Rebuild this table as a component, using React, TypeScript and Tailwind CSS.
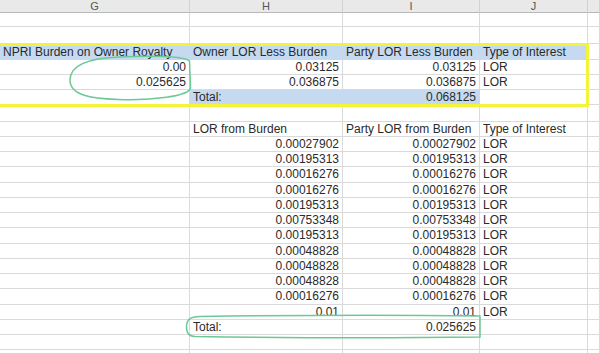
type Cell = { t?: string; r?: boolean; blue?: boolean }

const lowerRows: [string, string][] = [
  ['0.00027902', '0.00027902'],
  ['0.00195313', '0.00195313'],
  ['0.00016276', '0.00016276'],
  ['0.00016276', '0.00016276'],
  ['0.00195313', '0.00195313'],
  ['0.00753348', '0.00753348'],
  ['0.00195313', '0.00195313'],
  ['0.00048828', '0.00048828'],
  ['0.00048828', '0.00048828'],
  ['0.00048828', '0.00048828'],
  ['0.00016276', '0.00016276'],
  ['0.01', '0.01'],
]

const empty: Cell[] = [{}, {}, {}, {}, {}]

const rows: Cell[][] = [
  empty,
  empty,
  [
    { t: 'NPRI Burden on Owner Royalty', blue: true },
    { t: 'Owner LOR Less Burden', blue: true },
    { t: 'Party LOR Less Burden', blue: true },
    { t: 'Type of Interest', blue: true },
    {},
  ],
  [{ t: '0.00', r: true }, { t: '0.03125', r: true }, { t: '0.03125', r: true }, { t: 'LOR' }, {}],
  [{ t: '0.025625', r: true }, { t: '0.036875', r: true }, { t: '0.036875', r: true }, { t: 'LOR' }, {}],
  [{}, { t: 'Total:', blue: true }, { t: '0.068125', r: true, blue: true }, {}, {}],
  empty,
  [{}, { t: 'LOR from Burden' }, { t: 'Party LOR from Burden' }, { t: 'Type of Interest' }, {}],
  ...lowerRows.map(([a, b]) => [{}, { t: a, r: true }, { t: b, r: true }, { t: 'LOR' }, {}]),
  [{}, { t: 'Total:' }, { t: '0.025625', r: true }, {}, {}],
  empty,
  empty,
]

const letters = ['G', 'H', 'I', 'J', '']

export default function App() {
  return (
    <div
      className="relative h-[353px] w-[600px] overflow-hidden bg-white text-[#2a2a2a]"
      style={{ fontFamily: '"Liberation Sans", Arial, sans-serif' }}
    >
      <div className="grid grid-cols-[190px_153px_137px_108px_1fr] grid-rows-[13px_14px_17px_16px_15px_15px_15px_16.5px_repeat(16,15.25px)]">
        {letters.map((l, i) => (
          <div
            key={'h' + i}
            className="flex items-start justify-center border-r border-b border-r-[#d2d2d2] border-b-[#b8b8b8] bg-[#e9e9e9] text-[11px] leading-[12px] text-[#555]"
          >
            {l}
          </div>
        ))}
        {rows.map((row, ri) =>
          row.map((c, ci) => (
            <div
              key={ri + '-' + ci}
              className={
                'flex items-center overflow-visible whitespace-nowrap border-r border-b px-[3px] text-[12px] leading-none ' +
                (c.r ? 'justify-end ' : 'justify-start ') +
                (c.blue ? 'border-[#c5d9f1] bg-[#c5d9f1]' : 'border-[#dadada] bg-white')
              }
            >
              {c.t}
            </div>
          ))
        )}
      </div>

      {/* yellow selection box round the upper table */}
      <div className="pointer-events-none absolute left-[-3px] top-[43px] h-[64px] w-[592px] border-[3px] border-[#f3f33a]" />

      {/* hand drawn green marks */}
      <svg className="pointer-events-none absolute left-0 top-0" width="600" height="353" viewBox="0 0 600 353">
        <path
          d="M120 57 C150 55.5 184 56 189.5 61 L190.5 88 C189 96 152 101 118 99.5 C90 98.5 70 95 70 80 C70 65 90 58 120 57 Z"
          fill="none"
          stroke="#6cc895"
          strokeWidth="1.5"
        />
        <path
          d="M200 316.5 C300 315 420 315 480 316 L480 337 C400 338 300 338 195 336.5 C188.5 336 186.5 333 186.5 326 C187 319 190 317 200 316.5 Z"
          fill="none"
          stroke="#6cc895"
          strokeWidth="1.5"
        />
      </svg>
    </div>
  )
}
